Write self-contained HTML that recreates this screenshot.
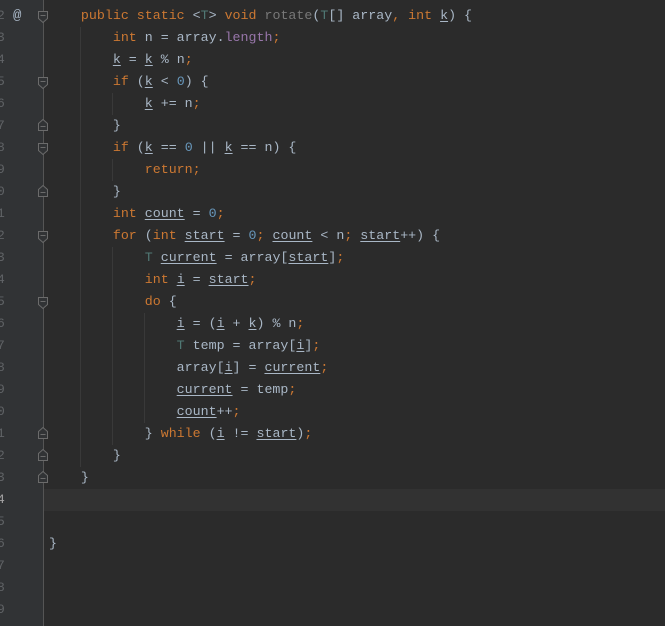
<!DOCTYPE html>
<html><head><style>
body{margin:0;width:665px;height:626px;background:#2b2b2b;overflow:hidden;position:relative;font-family:"Liberation Mono",monospace;font-size:13.3px}
.g{position:absolute;left:0;top:0;width:43px;height:626px;background:#313335}
.sep{position:absolute;left:43px;top:0;width:1px;height:626px;background:#555}
.cur{position:absolute;left:44px;top:489px;width:621px;height:22px;background:#323232}
.ln{position:absolute;left:-3px;width:20px;height:22px;line-height:22px;color:#606366;font-size:13px}
.l{position:absolute;left:49px;height:22px;line-height:22px;color:#a9b7c6;white-space:pre}
.k{color:#cc7832}.n{color:#6897bb}.t{color:#507874}.m{color:#787878}.p{color:#9876aa}
.u{text-decoration:underline;text-underline-offset:2px}
.ig{position:absolute;width:1px;background:#393939}
</style></head><body>
<div class="g"></div><div class="cur"></div>
<div class="ig" style="left:80px;top:27px;height:440px"></div>
<div class="ig" style="left:112px;top:93px;height:22px"></div>
<div class="ig" style="left:112px;top:159px;height:22px"></div>
<div class="ig" style="left:112px;top:247px;height:198px"></div>
<div class="ig" style="left:144px;top:313px;height:110px"></div>
<div class="sep"></div>
<div class="ln" style="top:5px">2</div><div class="ln" style="top:27px">3</div><div class="ln" style="top:49px">4</div><div class="ln" style="top:71px">5</div><div class="ln" style="top:93px">6</div><div class="ln" style="top:115px">7</div><div class="ln" style="top:137px">8</div><div class="ln" style="top:159px">9</div><div class="ln" style="top:181px">0</div><div class="ln" style="top:203px">1</div><div class="ln" style="top:225px">2</div><div class="ln" style="top:247px">3</div><div class="ln" style="top:269px">4</div><div class="ln" style="top:291px">5</div><div class="ln" style="top:313px">6</div><div class="ln" style="top:335px">7</div><div class="ln" style="top:357px">8</div><div class="ln" style="top:379px">9</div><div class="ln" style="top:401px">0</div><div class="ln" style="top:423px">1</div><div class="ln" style="top:445px">2</div><div class="ln" style="top:467px">3</div><div class="ln" style="top:489px;color:#a4a3a3">4</div><div class="ln" style="top:511px">5</div><div class="ln" style="top:533px">6</div><div class="ln" style="top:555px">7</div><div class="ln" style="top:577px">8</div><div class="ln" style="top:599px">9</div>
<div style="position:absolute;left:13px;top:5px;line-height:22px;color:#a9b7c6;font-size:14px">@</div>
<svg style="position:absolute;left:0;top:0" width="60" height="626">
<g fill="#313335" stroke="#6b6b6b" stroke-width="1">
<path d="M38.5 11.5h9v7l-4.5 4l-4.5-4z"/>
<path d="M38.5 77.5h9v7l-4.5 4l-4.5-4z"/>
<path d="M38.5 143.5h9v7l-4.5 4l-4.5-4z"/>
<path d="M38.5 231.5h9v7l-4.5 4l-4.5-4z"/>
<path d="M38.5 297.5h9v7l-4.5 4l-4.5-4z"/>
<path d="M38.5 130.5h9v-7l-4.5-4l-4.5 4z"/>
<path d="M38.5 196.5h9v-7l-4.5-4l-4.5 4z"/>
<path d="M38.5 438.5h9v-7l-4.5-4l-4.5 4z"/>
<path d="M38.5 460.5h9v-7l-4.5-4l-4.5 4z"/>
<path d="M38.5 482.5h9v-7l-4.5-4l-4.5 4z"/>
</g>
<g stroke="#6b6b6b"><path d="M40.5 15.5h5M40.5 81.5h5M40.5 147.5h5M40.5 235.5h5M40.5 301.5h5M40.5 126.5h5M40.5 192.5h5M40.5 434.5h5M40.5 456.5h5M40.5 478.5h5"/></g>
</svg>
<div class="l" style="top:5px">    <span class="k">public static </span>&lt;<span class="t">T</span>&gt; <span class="k">void </span><span class="m">rotate</span>(<span class="t">T</span>[] array<span class="k">, int </span><span class="u">k</span>) {</div>
<div class="l" style="top:27px">        <span class="k">int </span>n = array.<span class="p">length</span><span class="k">;</span></div>
<div class="l" style="top:49px">        <span class="u">k</span> = <span class="u">k</span> % n<span class="k">;</span></div>
<div class="l" style="top:71px">        <span class="k">if </span>(<span class="u">k</span> &lt; <span class="n">0</span>) {</div>
<div class="l" style="top:93px">            <span class="u">k</span> += n<span class="k">;</span></div>
<div class="l" style="top:115px">        }</div>
<div class="l" style="top:137px">        <span class="k">if </span>(<span class="u">k</span> == <span class="n">0</span> || <span class="u">k</span> == n) {</div>
<div class="l" style="top:159px">            <span class="k">return;</span></div>
<div class="l" style="top:181px">        }</div>
<div class="l" style="top:203px">        <span class="k">int </span><span class="u">count</span> = <span class="n">0</span><span class="k">;</span></div>
<div class="l" style="top:225px">        <span class="k">for </span>(<span class="k">int </span><span class="u">start</span> = <span class="n">0</span><span class="k">; </span><span class="u">count</span> &lt; n<span class="k">; </span><span class="u">start</span>++) {</div>
<div class="l" style="top:247px">            <span class="t">T </span><span class="u">current</span> = array[<span class="u">start</span>]<span class="k">;</span></div>
<div class="l" style="top:269px">            <span class="k">int </span><span class="u">i</span> = <span class="u">start</span><span class="k">;</span></div>
<div class="l" style="top:291px">            <span class="k">do </span>{</div>
<div class="l" style="top:313px">                <span class="u">i</span> = (<span class="u">i</span> + <span class="u">k</span>) % n<span class="k">;</span></div>
<div class="l" style="top:335px">                <span class="t">T </span>temp = array[<span class="u">i</span>]<span class="k">;</span></div>
<div class="l" style="top:357px">                array[<span class="u">i</span>] = <span class="u">current</span><span class="k">;</span></div>
<div class="l" style="top:379px">                <span class="u">current</span> = temp<span class="k">;</span></div>
<div class="l" style="top:401px">                <span class="u">count</span>++<span class="k">;</span></div>
<div class="l" style="top:423px">            } <span class="k">while </span>(<span class="u">i</span> != <span class="u">start</span>)<span class="k">;</span></div>
<div class="l" style="top:445px">        }</div>
<div class="l" style="top:467px">    }</div>
<div class="l" style="top:533px">}</div>
</body></html>
